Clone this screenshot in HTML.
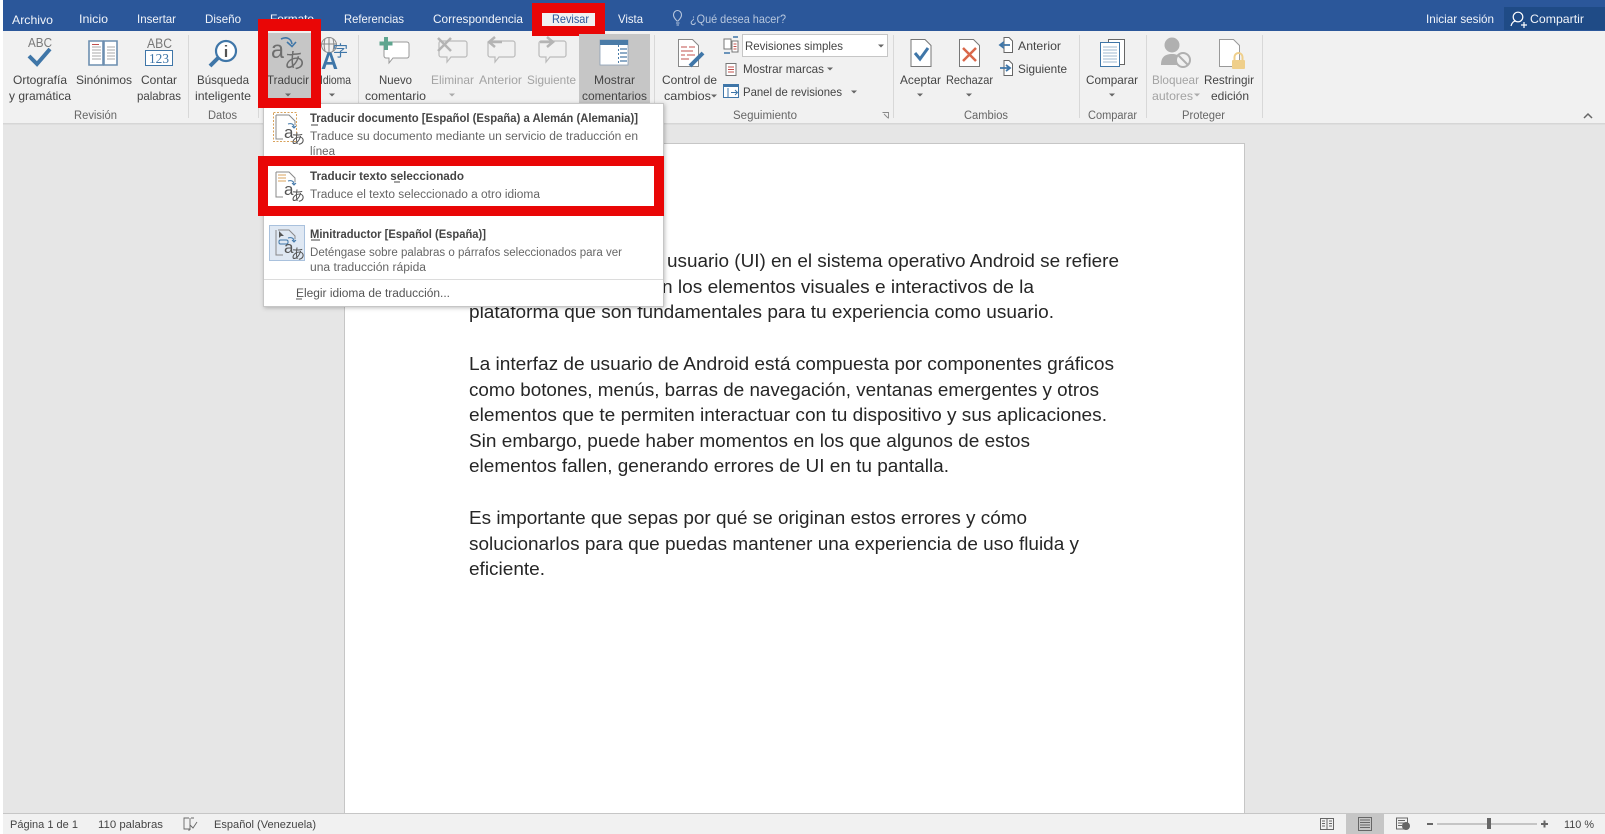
<!DOCTYPE html>
<html lang="es"><head><meta charset="utf-8"><title>Word - Revisar</title>
<style>
html,body{margin:0;padding:0;width:1605px;height:834px;overflow:hidden;background:#e6e6e6}
svg{display:block;position:absolute;left:0;top:0}
text{font-family:"Liberation Sans","Noto Sans CJK JP",sans-serif;font-size:12px;fill:#444}
.tab{fill:#f2f5fa;font-size:12px}
.dis{fill:#a3a3a3}
.grp{fill:#666;font-size:11.5px}
.doc{fill:#262626;font-size:18.5px}
.mt{fill:#444;font-size:12px;font-weight:bold}
.ms{fill:#666;font-size:11.5px}
.st{fill:#444;font-size:11px}
</style></head><body>
<svg width="1605" height="834" viewBox="0 0 1605 834">
<defs>
<polygon id="ar" points="-3,-1.5 3,-1.5 0,1.5" fill="#666"/>
<polygon id="ard" points="-3,-1.5 3,-1.5 0,1.5" fill="#aaa"/>
<filter id="sh" x="-5%" y="-5%" width="110%" height="110%"><feDropShadow dx="1" dy="1" stdDeviation="2" flood-color="#000" flood-opacity=".25"/></filter>
</defs>
<rect width="1605" height="834" fill="#e6e6e6"/>
<rect x="0" width="3" height="834" fill="#fff"/>
<!-- title bar -->
<rect x="3" y="0" width="1602" height="31" fill="#2b579a"/>
<rect x="1504" y="7" width="101" height="23" fill="#1f4b86"/>
<!-- ribbon -->
<rect x="3" y="31" width="1602" height="92" fill="#f1f1f1"/>
<rect x="3" y="123" width="1602" height="1.5" fill="#d6d6d6"/>
<!-- tabs -->
<text class="tab" x="12" y="24" textLength="41" lengthAdjust="spacingAndGlyphs">Archivo</text>
<text class="tab" x="79" y="23" textLength="29" lengthAdjust="spacingAndGlyphs">Inicio</text>
<text class="tab" x="137" y="23" textLength="39" lengthAdjust="spacingAndGlyphs">Insertar</text>
<text class="tab" x="205" y="23" textLength="36" lengthAdjust="spacingAndGlyphs">Diseño</text>
<text class="tab" x="270" y="23" textLength="44" lengthAdjust="spacingAndGlyphs">Formato</text>
<text class="tab" x="344" y="23" textLength="60" lengthAdjust="spacingAndGlyphs">Referencias</text>
<text class="tab" x="433" y="23" textLength="90" lengthAdjust="spacingAndGlyphs">Correspondencia</text>
<rect x="532" y="3" width="73" height="33" fill="#e90606"/>
<rect x="542" y="13" width="53" height="13" fill="#f1f1f1"/>
<text x="552" y="23" textLength="37" lengthAdjust="spacingAndGlyphs" style="fill:#2b579a">Revisar</text>
<text class="tab" x="618" y="23" textLength="25" lengthAdjust="spacingAndGlyphs">Vista</text>
<g fill="none" stroke="#b7c7de" stroke-width="1.1"><path d="M677 21c-2-2-3.500-4-3.500-6 0-2.800 1.800-4.500 4-4.500s4 1.700 4 4.500c0 2-1.500 4-3.500 6z"/><path d="M676 23h3.500M676.500 25h2.500"/></g>
<text x="690" y="23" textLength="96" lengthAdjust="spacingAndGlyphs" style="fill:#b7c7de">¿Qué desea hacer?</text>
<text class="tab" x="1426" y="23" textLength="68" lengthAdjust="spacingAndGlyphs">Iniciar sesión</text>
<g fill="none" stroke="#fff" stroke-width="1.2"><circle cx="1518" cy="17" r="4.800"/><path d="M1511 26c1-4 3-5 5-5M1521 25h6M1524 22v6"/></g>
<text class="tab" x="1530" y="23" textLength="54" lengthAdjust="spacingAndGlyphs">Compartir</text>
<!-- separators -->
<g fill="#d8d8d8"><rect x="188" y="35" width="1" height="83"/><rect x="258" y="35" width="1" height="83"/><rect x="358" y="35" width="1" height="83"/><rect x="654" y="35" width="1" height="83"/><rect x="893" y="35" width="1" height="83"/><rect x="1079" y="35" width="1" height="83"/><rect x="1146" y="35" width="1" height="83"/><rect x="1262" y="35" width="1" height="83"/></g>
<!-- highlighted buttons -->
<rect x="268" y="33" width="43" height="65" fill="#c6c6c6"/>
<rect x="579" y="34" width="71" height="72" fill="#c6c6c6"/>
<!-- Ortografia icon -->
<text x="28" y="47" textLength="24" lengthAdjust="spacingAndGlyphs" style="fill:#7a7a7a;font-size:13px">ABC</text>
<path d="M29 56l8 8 13-15" fill="none" stroke="#3f76a8" stroke-width="4"/>
<!-- Sinonimos -->
<g fill="#fff" stroke="#6d8fb0" stroke-width="1.600"><path d="M89 41h14l0 24h-14z"/><path d="M104 41h13v24h-13z"/></g>
<g stroke="#a8a8a8"><path d="M92 47h9M92 50h9M92 53h9M92 56h9M92 59h9M107 47h8M107 50h8M107 53h8M107 56h8M107 59h8"/></g>
<path d="M92 44.500h7" stroke="#c0504d"/>
<!-- Contar -->
<text x="147" y="48" textLength="25" lengthAdjust="spacingAndGlyphs" style="fill:#777;font-size:13.500px">ABC</text>
<rect x="145.500" y="50.500" width="27" height="15" fill="#fff" stroke="#3f76a8"/>
<text x="149" y="63" textLength="20" lengthAdjust="spacingAndGlyphs" style="font-family:'Liberation Serif',serif;font-size:13.500px;fill:#3f76a8">123</text>
<!-- Busqueda -->
<circle cx="226" cy="51" r="10" fill="#fff" stroke="#3f76a8" stroke-width="2.200"/>
<path d="M218 58l-8 8" stroke="#3f76a8" stroke-width="4"/>
<path d="M226 45v1.500M226 49v8" stroke="#555" stroke-width="2.200"/>
<!-- Traducir icon -->
<text x="271" y="58" textLength="13" lengthAdjust="spacingAndGlyphs" style="font-size:25px;fill:#6e6e6e">a</text>
<text x="284" y="68" style="font-size:21px;fill:#6e6e6e">あ</text>
<path d="M281 39c5-2.500 10-1 11 5" fill="none" stroke="#3f76a8" stroke-width="1.600"/>
<path d="M287 42l5 4.500 4-4.500" fill="none" stroke="#3f76a8" stroke-width="1.600"/>
<!-- Idioma icon -->
<g fill="none" stroke="#888"><circle cx="329" cy="45" r="7.500"/><path d="M322 44h14M329 38v14M325 39c-1 3-1 8 0 12M333 39c1 3 1 8 0 12"/></g>
<text x="321" y="69" textLength="17" lengthAdjust="spacingAndGlyphs" style="font-size:24px;font-weight:bold;fill:#3f76a8">A</text>
<text x="333" y="56" style="font-size:15px;fill:#3f76a8">字</text>
<!-- comments -->
<path d="M384 42h23c1 0 2 1 2 2v12c0 1-1 2-2 2h-14l-4 5v-5h-3c-1 0-2-1-2-2v-12c0-1 1-2 2-2z" fill="#fff" stroke="#999"/>
<path d="M386 37v13M379.500 43.500h13" stroke="#5fa58f" stroke-width="4"/>
<g fill="none" stroke="#bbb" stroke-width="1.200">
<path d="M441 41h24c1 0 2 1 2 2v12c0 1-1 2-2 2h-14l-4 5v-5h-6c-1 0-2-1-2-2v-12c0-1 1-2 2-2z"/>
<path d="M490 41h23c1 0 2 1 2 2v12c0 1-1 2-2 2h-14l-4 5v-5h-5c-1 0-2-1-2-2v-12c0-1 1-2 2-2z"/>
<path d="M541 41h23c1 0 2 1 2 2v12c0 1-1 2-2 2h-14l-4 5v-5h-5c-1 0-2-1-2-2v-12c0-1 1-2 2-2z"/>
</g>
<path d="M438 38l13 13M451 38l-13 13" stroke="#b4b4b4" stroke-width="2.500"/>
<path d="M502 42h-12M495 37l-6 5 6 5" fill="none" stroke="#b4b4b4" stroke-width="2.500"/>
<path d="M540 42h12M547 37l6 5-6 5" fill="none" stroke="#b4b4b4" stroke-width="2.500"/>
<!-- Mostrar comentarios icon -->
<rect x="600" y="40" width="28" height="25" fill="#fff" stroke="#8a9fb5" stroke-width=".8"/>
<rect x="600" y="40" width="28" height="5" fill="#4a7ba7"/>
<path d="M618.500 45v20" stroke="#4a7ba7" stroke-dasharray="2 2"/>
<path d="M620 49h7M620 53h7M620 57h7M620 61h7" stroke="#4a7ba7" stroke-width="1.300"/>
<!-- Control cambios -->
<path d="M678.500 39.500h14l6 6v21h-20z" fill="#fff" stroke="#888"/>
<path d="M681 47h6M689 47h6M681 51h12M681 55h4M687 55h8M681 59h8" stroke="#c0504d" stroke-width="1"/>
<path d="M690 66l13-13" stroke="#3f76a8" stroke-width="4"/>
<!-- revisiones simples -->
<rect x="742.500" y="34.500" width="145" height="22" fill="#fff" stroke="#c6c6c6"/>
<g fill="#fff" stroke="#777"><rect x="724" y="39" width="7" height="10"/><rect x="732" y="41" width="6" height="11"/></g>
<path d="M733.500 44h3M733.500 46.500h3M733.500 49h3" stroke="#c0504d" stroke-width=".9"/>
<path d="M733 37h5M724 53h6" stroke="#3f76a8" stroke-width="1.500"/>
<rect x="726" y="63.500" width="10" height="12" fill="#fff" stroke="#777"/>
<path d="M728 67h6M728 69.500h6M728 72h6" stroke="#c0504d" stroke-width=".9"/>
<rect x="723.500" y="84.500" width="15" height="13" fill="#fff" stroke="#3f76a8"/>
<rect x="723" y="84" width="16" height="3" fill="#3f76a8"/>
<path d="M728 88v9M731 92.500h6M735 90l2.500 2.500-2.500 2.500" fill="none" stroke="#3f76a8"/>
<text x="745" y="50" textLength="98" lengthAdjust="spacingAndGlyphs">Revisiones simples</text>
<use href="#ar" x="881" y="46"/>
<text x="743" y="73" textLength="81" lengthAdjust="spacingAndGlyphs">Mostrar marcas</text>
<use href="#ar" x="830" y="69"/>
<text x="743" y="96" textLength="99" lengthAdjust="spacingAndGlyphs">Panel de revisiones</text>
<use href="#ar" x="854" y="92"/>
<path d="M882.500 112.500h6v6M884 114l4 4" fill="none" stroke="#888" stroke-width=".9"/>
<!-- Aceptar / Rechazar -->
<path d="M911 39.500h14l6 6v21h-20z" fill="#fff" stroke="#777"/>
<path d="M915 53l5 6 8-11" fill="none" stroke="#3f76a8" stroke-width="3"/>
<path d="M959.500 39.500h14l6 6v21h-20z" fill="#fff" stroke="#777"/>
<path d="M963 48l13 13M976 48l-13 13" stroke="#d9674a" stroke-width="2.500"/>
<!-- Anterior / Siguiente -->
<g fill="#fff" stroke="#666"><path d="M1004 37.500h5l3.500 3.500v11.500h-8.500z"/><path d="M1004 60.500h5l3.500 3.500v11.500h-8.500z"/></g>
<path d="M1010 45h-9M1004 42l-4 3 4 3" fill="none" stroke="#3f76a8" stroke-width="1.800"/>
<path d="M1000 68h9M1006 65l4 3-4 3" fill="none" stroke="#3f76a8" stroke-width="1.800"/>
<text x="1018" y="50" textLength="43" lengthAdjust="spacingAndGlyphs">Anterior</text>
<text x="1018" y="73" textLength="49" lengthAdjust="spacingAndGlyphs">Siguiente</text>
<!-- Comparar -->
<rect x="1108.500" y="39.500" width="16" height="25" fill="#fff" stroke="#666"/>
<rect x="1100.500" y="42.500" width="19" height="24" fill="#fff" stroke="#3f76a8"/>
<path d="M1103 47h14M1103 50h14M1103 53h14M1103 56h14M1103 59h14M1103 62h14" stroke="#9fb8d0"/>
<!-- Bloquear -->
<circle cx="1172" cy="45" r="7.500" fill="#b0b0b0"/>
<path d="M1161 65c0-8 4-11 11-11s9 3 9 11z" fill="#b0b0b0"/>
<circle cx="1183" cy="60" r="7" fill="#f1f1f1" stroke="#b0b0b0" stroke-width="2"/>
<path d="M1178 55l10 10" stroke="#b0b0b0" stroke-width="2"/>
<!-- Restringir -->
<path d="M1219.500 39.500h14l6 6v21h-20z" fill="#fff" stroke="#999"/>
<rect x="1232" y="60" width="13" height="9" rx="1" fill="#efcf8b"/>
<path d="M1234.500 60v-3a4 4 0 0 1 8 0v3" fill="none" stroke="#efcf8b" stroke-width="2"/>
<!-- ribbon labels -->
<text x="13" y="84" textLength="54" lengthAdjust="spacingAndGlyphs">Ortografía</text>
<text x="9" y="100" textLength="62" lengthAdjust="spacingAndGlyphs">y gramática</text>
<text x="76" y="84" textLength="56" lengthAdjust="spacingAndGlyphs">Sinónimos</text>
<text x="141" y="84" textLength="36" lengthAdjust="spacingAndGlyphs">Contar</text>
<text x="137" y="100" textLength="44" lengthAdjust="spacingAndGlyphs">palabras</text>
<text x="197" y="84" textLength="52" lengthAdjust="spacingAndGlyphs">Búsqueda</text>
<text x="195" y="100" textLength="56" lengthAdjust="spacingAndGlyphs">inteligente</text>
<text x="267" y="84" textLength="42" lengthAdjust="spacingAndGlyphs">Traducir</text>
<use href="#ar" x="288" y="95"/>
<text x="320" y="84" textLength="31" lengthAdjust="spacingAndGlyphs">Idioma</text>
<use href="#ar" x="332" y="95"/>
<text x="379" y="84" textLength="33" lengthAdjust="spacingAndGlyphs">Nuevo</text>
<text x="365" y="100" textLength="61" lengthAdjust="spacingAndGlyphs">comentario</text>
<text class="dis" x="431" y="84" textLength="43" lengthAdjust="spacingAndGlyphs">Eliminar</text>
<use href="#ard" x="452" y="95"/>
<text class="dis" x="479" y="84" textLength="43" lengthAdjust="spacingAndGlyphs">Anterior</text>
<text class="dis" x="527" y="84" textLength="49" lengthAdjust="spacingAndGlyphs">Siguiente</text>
<text x="594" y="84" textLength="41" lengthAdjust="spacingAndGlyphs">Mostrar</text>
<text x="582" y="100" textLength="65" lengthAdjust="spacingAndGlyphs">comentarios</text>
<text x="662" y="84" textLength="55" lengthAdjust="spacingAndGlyphs">Control de</text>
<text x="664" y="100" textLength="47" lengthAdjust="spacingAndGlyphs">cambios</text>
<use href="#ar" x="714" y="96"/>
<text x="900" y="84" textLength="41" lengthAdjust="spacingAndGlyphs">Aceptar</text>
<use href="#ar" x="920" y="95"/>
<text x="946" y="84" textLength="47" lengthAdjust="spacingAndGlyphs">Rechazar</text>
<use href="#ar" x="969" y="95"/>
<text x="1086" y="84" textLength="52" lengthAdjust="spacingAndGlyphs">Comparar</text>
<use href="#ar" x="1112" y="95"/>
<text class="dis" x="1152" y="84" textLength="47" lengthAdjust="spacingAndGlyphs">Bloquear</text>
<text class="dis" x="1152" y="100" textLength="41" lengthAdjust="spacingAndGlyphs">autores</text>
<use href="#ard" x="1197" y="95"/>
<text x="1204" y="84" textLength="50" lengthAdjust="spacingAndGlyphs">Restringir</text>
<text x="1211" y="100" textLength="38" lengthAdjust="spacingAndGlyphs">edición</text>
<!-- group labels -->
<text class="grp" x="74" y="119" textLength="43" lengthAdjust="spacingAndGlyphs">Revisión</text>
<text class="grp" x="208" y="119" textLength="29" lengthAdjust="spacingAndGlyphs">Datos</text>
<text class="grp" x="733" y="119" textLength="64" lengthAdjust="spacingAndGlyphs">Seguimiento</text>
<text class="grp" x="964" y="119" textLength="44" lengthAdjust="spacingAndGlyphs">Cambios</text>
<text class="grp" x="1088" y="119" textLength="49" lengthAdjust="spacingAndGlyphs">Comparar</text>
<text class="grp" x="1182" y="119" textLength="43" lengthAdjust="spacingAndGlyphs">Proteger</text>
<path d="M1584 118l4-4 4 4" fill="none" stroke="#666" stroke-width="1.500"/>
<!-- document -->
<rect x="344.500" y="143.500" width="900" height="670" fill="#fff" stroke="#c6c6c6"/>
<text class="doc" x="667" y="267" textLength="452" lengthAdjust="spacingAndGlyphs">usuario (UI) en el sistema operativo Android se refiere</text>
<text class="doc" x="662" y="293" textLength="372" lengthAdjust="spacingAndGlyphs">n los elementos visuales e interactivos de la</text>
<text class="doc" x="469" y="318" textLength="585" lengthAdjust="spacingAndGlyphs">plataforma que son fundamentales para tu experiencia como usuario.</text>
<text class="doc" x="469" y="370" textLength="645" lengthAdjust="spacingAndGlyphs">La interfaz de usuario de Android está compuesta por componentes gráficos</text>
<text class="doc" x="469" y="396" textLength="630" lengthAdjust="spacingAndGlyphs">como botones, menús, barras de navegación, ventanas emergentes y otros</text>
<text class="doc" x="469" y="421" textLength="638" lengthAdjust="spacingAndGlyphs">elementos que te permiten interactuar con tu dispositivo y sus aplicaciones.</text>
<text class="doc" x="469" y="447" textLength="561" lengthAdjust="spacingAndGlyphs">Sin embargo, puede haber momentos en los que algunos de estos</text>
<text class="doc" x="469" y="472" textLength="480" lengthAdjust="spacingAndGlyphs">elementos fallen, generando errores de UI en tu pantalla.</text>
<text class="doc" x="469" y="524" textLength="558" lengthAdjust="spacingAndGlyphs">Es importante que sepas por qué se originan estos errores y cómo</text>
<text class="doc" x="469" y="550" textLength="610" lengthAdjust="spacingAndGlyphs">solucionarlos para que puedas mantener una experiencia de uso fluida y</text>
<text class="doc" x="469" y="575" textLength="76" lengthAdjust="spacingAndGlyphs">eficiente.</text>
<!-- menu -->
<rect x="263.500" y="103.500" width="400" height="203" fill="#fff" stroke="#c6c6c6" filter="url(#sh)"/>
<rect x="273.500" y="112.500" width="23" height="29" fill="none" stroke="#d9a35c" stroke-dasharray="2 1.500"/>
<path d="M276 115h13l6 6v4M276 115v24h7" fill="none" stroke="#888"/>
<text x="284" y="138" style="font-size:17px;fill:#555">a</text><text x="291" y="144" style="font-size:14px;fill:#555">あ</text>
<path d="M288 124c3-1 6 0 6 3M292 126l2 2 2-2" fill="none" stroke="#3f76a8"/>
<text class="mt" x="310" y="122" textLength="328" lengthAdjust="spacingAndGlyphs">Traducir documento [Español (España) a Alemán (Alemania)]</text>
<path d="M311 125h7" stroke="#444"/>
<text class="ms" x="310" y="140" textLength="328" lengthAdjust="spacingAndGlyphs">Traduce su documento mediante un servicio de traducción en</text>
<text class="ms" x="310" y="155" textLength="25" lengthAdjust="spacingAndGlyphs">línea</text>
<!-- red box item 2 -->
<rect x="263" y="161" width="396" height="50" fill="none" stroke="#e90606" stroke-width="10"/>
<path d="M278 175h8M278 178h8M278 181h8" stroke="#d9a35c"/>
<path d="M276 172h13l6 6v4M276 172v25h7" fill="none" stroke="#888"/>
<text x="284" y="195" style="font-size:17px;fill:#555">a</text><text x="291" y="201" style="font-size:14px;fill:#555">あ</text>
<path d="M288 181c3-1 6 0 6 3M292 183l2 2 2-2" fill="none" stroke="#3f76a8"/>
<text class="mt" x="310" y="180" textLength="154" lengthAdjust="spacingAndGlyphs">Traducir texto seleccionado</text>
<path d="M394 182h6" stroke="#444"/>
<text class="ms" x="310" y="198" textLength="230" lengthAdjust="spacingAndGlyphs">Traduce el texto seleccionado a otro idioma</text>
<!-- item 3 -->
<rect x="269.500" y="225.500" width="35" height="35" fill="#dfe8f3" stroke="#a9c1dd"/>
<path d="M278 230h11l6 6v3M276 230v25h7" fill="none" stroke="#888"/>
<path d="M279 231l0 7 2-2 3 0z" fill="#555"/>
<rect x="279" y="240" width="9" height="4" rx="1.500" fill="none" stroke="#3f76a8"/>
<text x="284" y="253" style="font-size:17px;fill:#555">a</text><text x="291" y="259" style="font-size:14px;fill:#555">あ</text>
<path d="M288 238c3-1 6 0 6 3M292 240l2 2 2-2" fill="none" stroke="#3f76a8"/>
<text class="mt" x="310" y="238" textLength="176" lengthAdjust="spacingAndGlyphs">Minitraductor [Español (España)]</text>
<path d="M311 240h9" stroke="#444"/>
<text class="ms" x="310" y="256" textLength="312" lengthAdjust="spacingAndGlyphs">Deténgase sobre palabras o párrafos seleccionados para ver</text>
<text class="ms" x="310" y="271" textLength="116" lengthAdjust="spacingAndGlyphs">una traducción rápida</text>
<rect x="264" y="279" width="399" height="1" fill="#dcdcdc"/>
<text class="ms" x="296" y="297" textLength="154" lengthAdjust="spacingAndGlyphs" style="fill:#555">Elegir idioma de traducción...</text>
<path d="M296 299h6" stroke="#555"/>
<!-- red box Traducir -->
<path d="M258 19h63v89h-63zM268 31v67h43v-67z" fill="#e90606" fill-rule="evenodd"/>
<rect x="268" y="31" width="43" height="2" fill="#f1f1f1"/>
<!-- status bar -->
<rect x="3" y="813" width="1602" height="21" fill="#f1f1f1"/>
<rect x="3" y="813" width="1602" height="1" fill="#c6c6c6"/>
<rect x="1346" y="814" width="38" height="20" fill="#c6c6c6"/>
<text class="st" x="10" y="828" textLength="68" lengthAdjust="spacingAndGlyphs">Página 1 de 1</text>
<text class="st" x="98" y="828" textLength="65" lengthAdjust="spacingAndGlyphs">110 palabras</text>
<path d="M189 818h-5v11h5l0 2M190 818v12M191 818h3M190 825l3 3 4-6" fill="none" stroke="#666" stroke-width=".9"/>
<text class="st" x="214" y="828" textLength="102" lengthAdjust="spacingAndGlyphs">Español (Venezuela)</text>
<g fill="none" stroke="#666">
<rect x="1320.500" y="818.500" width="13" height="11"/><path d="M1327 818v12M1322 821h3M1322 823.500h3M1322 826h3M1329 821h3M1329 823.500h3M1329 826h3"/>
<rect x="1358.500" y="817.500" width="13" height="13"/><path d="M1360 820h10M1360 822.500h10M1360 825h10M1360 827.500h10"/>
<path d="M1406 829h-9.500v-11h11v5M1398 820.500h7M1398 823h6M1398 825.500h4"/>
</g>
<circle cx="1406" cy="826" r="4" fill="#666"/>
<path d="M1427 824h6M1541 824h7M1544.500 820.500v7" stroke="#666" stroke-width="2"/>
<rect x="1437" y="823.500" width="100" height="1" fill="#999"/>
<rect x="1487" y="818" width="4" height="11" fill="#666"/>
<text class="st" x="1564" y="828" textLength="30" lengthAdjust="spacingAndGlyphs">110 %</text>
</svg>
</body></html>
